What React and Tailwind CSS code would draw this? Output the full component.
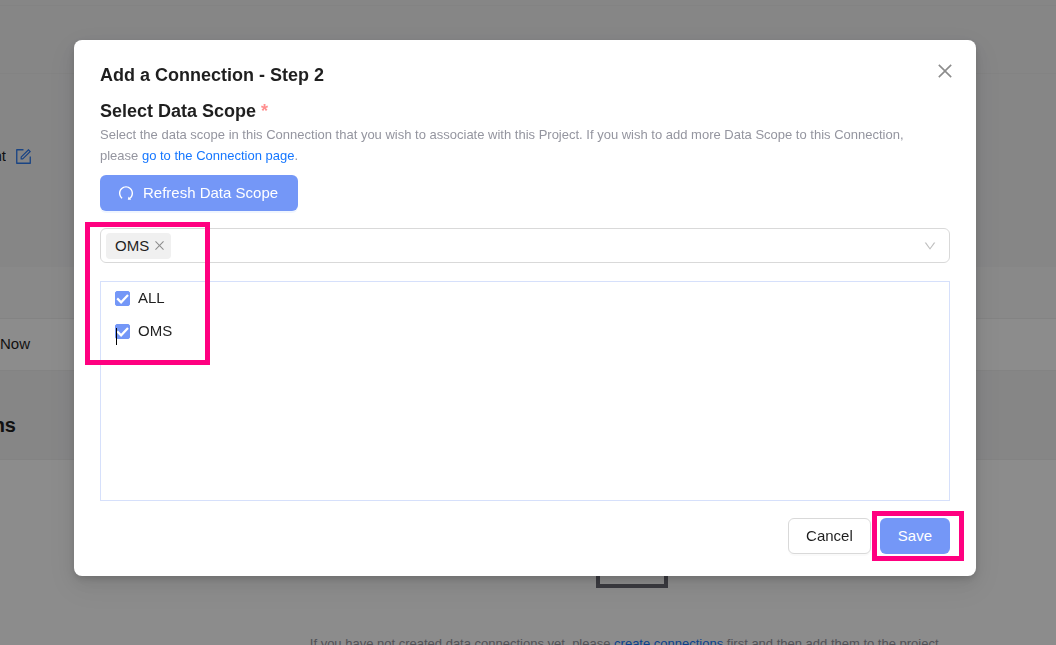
import React, { useState } from 'react';
import { AiOutlineClose, AiOutlineDown, AiOutlineForm, AiOutlineRedo } from 'react-icons/ai';

const scopes = ['ALL', 'OMS'];

const ProjectPage = () => {
  return (
    <div className="flex h-screen flex-col overflow-hidden bg-white">
      <div className="h-[6px] shrink-0 border-b border-[#eeeeef] bg-[#f4f4f5]" />
      <header className="h-[68px] shrink-0 border-b border-[#eeeeef] bg-[#f4f4f5]" />
      <section className="h-[193px] shrink-0 bg-[#f4f4f5] pt-[70px]">
        <div className="flex h-6 items-center gap-2">
          <span className="flex w-[6px] justify-end overflow-hidden">nt</span>
          <button type="button" aria-label="Edit" className="text-[#2f7cf0]">
            <AiOutlineForm size={19} />
          </button>
        </div>
      </section>
      <div className="h-[52px] shrink-0 border-b border-[#eeeeef] bg-[#f9f9fa]" />
      <div className="flex h-[52px] shrink-0 items-center border-b border-[#eeeeef] pb-[2px]">Now</div>
      <section className="flex h-[89px] shrink-0 items-center border-b border-[#eeeeef] bg-[#f4f4f5] pt-5">
        <h2 className="flex w-4 justify-end overflow-hidden text-xl font-bold">ns</h2>
      </section>
      <section className="flex shrink-0 flex-col items-center pt-14 pl-[196px]">
        <svg className="ml-3" width="72" height="72" viewBox="0 0 72 72" fill="none" stroke="#6a6a74" strokeWidth="4">
          <path d="M2 2h68v68H2z" />
        </svg>
        <p className="mt-[44px] text-[13px] leading-6 text-[#94959f]">
          If you have not created data connections yet, please{' '}
          <a href="#connections" className="text-[#1677ff]">create connections</a>
          {' '}first and then add them to the project.
        </p>
      </section>
    </div>
  );
};

const ScopeCheckbox = ({ label, checked, onChange }) => {
  return (
    <label className="flex h-[33px] items-center gap-2">
      <span className="grid size-[15px]">
        <input
          type="checkbox"
          checked={checked}
          onChange={onChange}
          className="col-start-1 row-start-1 size-[15px] appearance-none rounded-xs border border-[#d9d9d9] checked:border-[#7497f7] checked:bg-[#7497f7]"
        />
        {checked && (
          <svg viewBox="0 0 15 15" className="pointer-events-none col-start-1 row-start-1 size-[15px]" fill="none" stroke="#fff" strokeWidth="2.2">
            <path d="M2.2 7.4l3.9 3.9 6.9-7.4" />
          </svg>
        )}
      </span>
      <span className="pb-[2px]">{label}</span>
    </label>
  );
};

const ConnectionModal = () => {
  const [selected, setSelected] = useState({ ALL: true, OMS: true });

  const toggle = (name) => setSelected({ ...selected, [name]: !selected[name] });

  return (
    <div
      role="dialog"
      aria-labelledby="modal-title"
      className="relative w-full max-w-[902px] rounded-lg bg-white px-[26px] pt-[22px] pb-[22px] shadow-[0_6px_18px_rgba(0,0,0,0.08),0_3px_7px_rgba(0,0,0,0.12),0_10px_30px_8px_rgba(0,0,0,0.05)]"
    >
      <button type="button" aria-label="Close" className="absolute top-[21px] right-[21px] text-[#8c8c8c]">
        <AiOutlineClose size={20} />
      </button>

      <h1 id="modal-title" className="text-lg leading-[26px] font-bold">Add a Connection - Step 2</h1>
      <h2 className="mt-[10px] text-lg leading-[26px] font-bold">
        Select Data Scope <span className="text-[#ff8f8f]">*</span>
      </h2>
      <p className="text-[13px] leading-[21px] text-[#94959f]">
        Select the data scope in this Connection that you wish to associate with this Project. If you wish to add more Data Scope to this Connection,
        <br />
        please <a href="#connection" className="text-[#1677ff]">go to the Connection page</a>.
      </p>

      <button
        type="button"
        className="mt-[9px] flex h-9 items-center gap-2 rounded-md bg-[#7497f7] pr-5 pl-[17px] text-white shadow-[0_2px_0_rgba(5,95,255,0.06)]"
      >
        <AiOutlineRedo size={18} />
        Refresh Data Scope
      </button>

      <div className="relative mt-[17px]">
        <div className="flex h-[35px] items-center justify-between rounded-md border border-[#d9d9d9] pr-[12px] pl-[5px]">
          <span className="flex h-[26px] items-center gap-1 rounded-sm bg-[#f0f0f0] pr-[5px] pl-[9px]">
            OMS
            <button type="button" aria-label="Remove OMS" className="text-[#8c8c8c]">
              <AiOutlineClose size={13} />
            </button>
          </span>
          <button type="button" aria-label="Open list" className="text-[#bfbfbf]">
            <AiOutlineDown size={14} />
          </button>
        </div>

        <div className="mt-[18px] h-[220px] border border-[#d6e0fb] px-[14px]">
          {scopes.map((name) => (
            <ScopeCheckbox key={name} label={name} checked={selected[name]} onChange={() => toggle(name)} />
          ))}
        </div>

        <span className="absolute top-[100px] left-4 h-[17px] w-px bg-black" />
        <span className="pointer-events-none absolute -top-[6px] -left-[15px] h-[143px] w-[125px] border-5 border-[#ff0080]" />
      </div>

      <div className="mt-[17px] flex justify-end gap-[9px]">
        <button type="button" className="h-9 rounded-md border border-[#d9d9d9] bg-white px-[17px] shadow-[0_2px_0_rgba(0,0,0,0.02)]">
          Cancel
        </button>
        <div className="relative">
          <button type="button" className="h-9 rounded-md bg-[#7497f7] px-[18px] text-white">
            Save
          </button>
          <span className="pointer-events-none absolute -top-[7px] -right-[14px] -bottom-[7px] -left-2 border-5 border-[#ff0080]" />
        </div>
      </div>
    </div>
  );
};

const App = () => {
  return (
    <div className="font-['Liberation_Sans',Arial,sans-serif] text-[15px] leading-6 text-[#1f1f1f]">
      <ProjectPage />
      <div className="fixed inset-0 flex items-start justify-center bg-black/45 pt-10 pr-[6px]">
        <ConnectionModal />
      </div>
    </div>
  );
};

export default App;
